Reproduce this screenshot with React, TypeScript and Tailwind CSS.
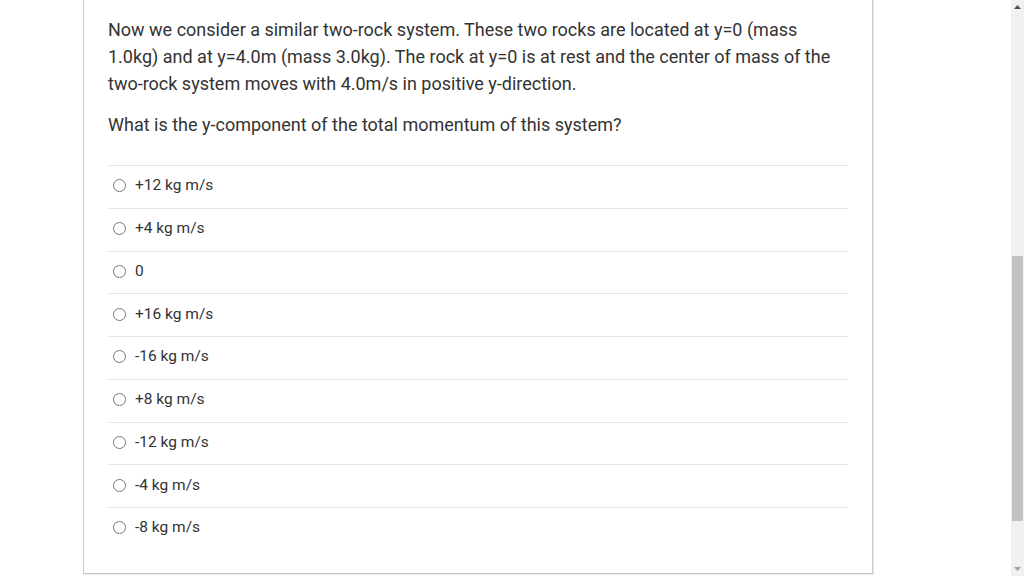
const options = [
  '+12 kg m/s',
  '+4 kg m/s',
  '0',
  '+16 kg m/s',
  '-16 kg m/s',
  '+8 kg m/s',
  '-12 kg m/s',
  '-4 kg m/s',
  '-8 kg m/s',
];

export default function App() {
  return (
    <div className="flex h-[576px] w-[1024px] overflow-hidden bg-white font-['Roboto','Liberation_Sans',sans-serif] text-[#333]">
      <div className="flex-1">
        {/* Question card (page scrolled, top edge off screen) */}
        <div className="ml-[83px] w-[790px] border-x border-b border-[#c9c9c9] px-6 pt-[16px] pb-[23px] shadow-[1px_1px_1px_rgba(0,0,0,0.08)]">
          <p className="whitespace-nowrap text-[18px] leading-[27px]">
            Now we consider a similar two-rock system. These two rocks are located at y=0 (mass
            <br />
            1.0kg) and at y=4.0m (mass 3.0kg). The rock at y=0 is at rest and the center of mass of the
            <br />
            two-rock system moves with 4.0m/s in positive y-direction.
          </p>
          <p className="mt-[14px] text-[18px] leading-[27px]">
            What is the y-component of the total momentum of this system?
          </p>
          <div className="mt-[27px]">
            {options.map((opt) => (
              <label
                key={opt}
                className="flex h-[42.75px] items-center border-t border-[#e6e6e6] pb-[2px] pl-[5px]"
              >
                <span className="h-[13px] w-[13px] rounded-full border border-[#777] bg-white" />
                <span className="ml-[9px] text-[15.5px]">{opt}</span>
              </label>
            ))}
          </div>
        </div>
      </div>
      {/* Scrollbar */}
      <div className="flex w-[13px] flex-col bg-[#f1f1f1]">
        <div className="flex h-[14px] items-center justify-center">
          <svg width="7" height="4" viewBox="0 0 7 4">
            <path d="M3.5 0L7 4H0z" fill="#505050" />
          </svg>
        </div>
        <div className="h-[242px]" />
        <div className="mx-[1px] h-[265px] bg-[#c1c1c1]" />
        <div className="flex-1" />
        <div className="flex h-[14px] items-center justify-center">
          <svg width="7" height="4" viewBox="0 0 7 4">
            <path d="M0 0H7L3.5 4z" fill="#a3a3a3" />
          </svg>
        </div>
      </div>
    </div>
  );
}
